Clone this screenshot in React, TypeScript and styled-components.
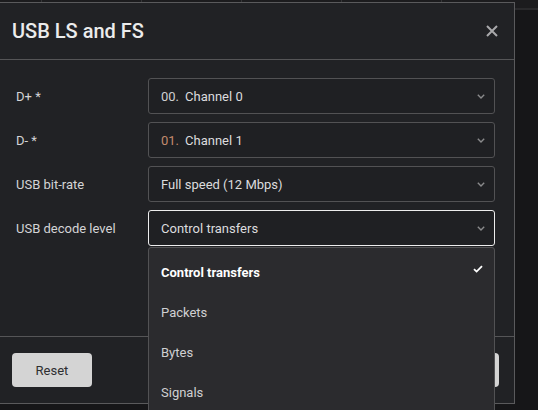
import React from 'react';
import styled, { createGlobalStyle } from 'styled-components';

const GlobalStyle = createGlobalStyle`
  html, body {
    margin: 0;
    padding: 0;
    background: #161618;
  }
  * {
    box-sizing: border-box;
  }
`;

type Field = {
  label: string;
  prefix?: string;
  value: string;
  accent?: boolean;
};

const fields: Field[] = [
  { label: 'D+ *', prefix: '00.', value: 'Channel 0' },
  { label: 'D- *', prefix: '01.', value: 'Channel 1', accent: true },
  { label: 'USB bit-rate', value: 'Full speed (12 Mbps)' },
];

const levels = ['Control transfers', 'Packets', 'Bytes', 'Signals'];

const Chevron = () => (
  <svg width="8" height="5" viewBox="0 0 8 5" fill="none">
    <path d="M0.8 0.8 L4 4 L7.2 0.8" stroke="#8a8a8c" strokeWidth="1.4" />
  </svg>
);

const App = () => {
  return (
    <Page>
      <GlobalStyle />
      <TableHead>
        {[0, 1, 2, 3, 4, 5].map((i) => (
          <HeadCell key={i} />
        ))}
      </TableHead>

      <Modal>
        <Header>
          <Title>USB LS and FS</Title>
          <CloseButton aria-label="Close">
            <svg width="12" height="12" viewBox="0 0 12 12">
              <path d="M1 1 L11 11 M11 1 L1 11" stroke="#a9a9ab" strokeWidth="2" />
            </svg>
          </CloseButton>
        </Header>

        <Body>
          {fields.map((f) => (
            <Row key={f.label}>
              <Label>{f.label}</Label>
              <Select>
                <SelectText>
                  {f.prefix && <Prefix $accent={f.accent}>{f.prefix}</Prefix>}
                  {f.value}
                </SelectText>
                <Chevron />
              </Select>
            </Row>
          ))}
          <Row>
            <Label>USB decode level</Label>
            <SelectWrap>
              <Select $focused>
                <SelectText>Control transfers</SelectText>
                <Chevron />
              </Select>
              <Menu>
                {levels.map((l, i) => (
                  <MenuItem key={l} $selected={i === 0}>
                    {l}
                    {i === 0 && (
                      <svg width="10" height="8" viewBox="0 0 10 8" fill="none">
                        <path d="M1 4.2 L3.6 6.6 L9 1.2" stroke="#ffffff" strokeWidth="1.8" />
                      </svg>
                    )}
                  </MenuItem>
                ))}
              </Menu>
            </SelectWrap>
          </Row>
        </Body>

        <Footer>
          <Button>Reset</Button>
          <Button>Apply</Button>
        </Footer>
      </Modal>
    </Page>
  );
};

const Page = styled.div`
  position: relative;
  width: 538px;
  height: 410px;
  overflow: hidden;
  background: #161618;
  font-family: Roboto, 'Noto Sans', sans-serif;
`;

const TableHead = styled.div`
  display: grid;
  grid-template-columns: 42px repeat(5, 100px);
  height: 10px;
  background: #1c1c1e;
  border-bottom: 2px solid #2a2a2c;
`;

const HeadCell = styled.div`
  border-right: 1px solid #353537;
`;

const Modal = styled.div`
  position: absolute;
  top: 2px;
  left: -2px;
  width: 517px;
  height: 402px;
  display: flex;
  flex-direction: column;
  background: #212225;
  border: 1px solid #5a5a5c;
`;

const Header = styled.div`
  display: flex;
  align-items: center;
  justify-content: space-between;
  height: 57px;
  padding: 0 14px 0 13px;
  border-bottom: 1px solid #555557;
`;

const Title = styled.h2`
  margin: 0;
  font-size: 20px;
  font-weight: 500;
  color: #ececec;
`;

const CloseButton = styled.button`
  display: flex;
  align-items: center;
  justify-content: center;
  width: 16px;
  height: 16px;
  padding: 0;
  border: none;
  background: transparent;
`;

const Body = styled.div`
  flex: 1;
  display: flex;
  flex-direction: column;
  gap: 8px;
  padding: 18px 19px 0 17px;
`;

const Row = styled.div`
  display: grid;
  grid-template-columns: 132px 1fr;
  align-items: center;
`;

const Label = styled.span`
  font-size: 13px;
  color: #d4d4d6;
`;

const SelectWrap = styled.div`
  position: relative;
`;

const Select = styled.div<{ $focused?: boolean }>`
  display: flex;
  align-items: center;
  justify-content: space-between;
  height: 36px;
  padding: 0 9px 0 12px;
  border: 1px solid ${(p) => (p.$focused ? '#ededed' : '#525254')};
  border-radius: 3px;
  background: #1f2023;
`;

const SelectText = styled.span`
  font-size: 13px;
  color: #dcdcde;
`;

const Prefix = styled.span<{ $accent?: boolean }>`
  margin-right: 6px;
  color: ${(p) => (p.$accent ? '#c38a6d' : '#cfcfd1')};
`;

const Menu = styled.div`
  position: absolute;
  top: calc(100% + 1px);
  left: 0;
  right: 0;
  padding: 4px 0;
  background: #2b2b2e;
  border: 1px solid #525254;
  border-radius: 3px;
`;

const MenuItem = styled.div<{ $selected?: boolean }>`
  display: flex;
  align-items: center;
  justify-content: space-between;
  height: 40px;
  padding: 0 11px 0 12px;
  font-size: 13px;
  font-weight: ${(p) => (p.$selected ? 700 : 400)};
  color: ${(p) => (p.$selected ? '#ffffff' : '#d0d0d2')};

  svg {
    margin-bottom: 6px;
  }
`;

const Footer = styled.div`
  display: flex;
  align-items: center;
  justify-content: space-between;
  height: 67px;
  padding: 0 15px 0 13px;
  border-top: 1px solid #555557;
`;

const Button = styled.button`
  width: 80px;
  height: 34px;
  border: none;
  border-radius: 4px;
  background: #d4d4d4;
  font-family: Roboto, 'Noto Sans', sans-serif;
  font-size: 13px;
  color: #2e2e30;
`;

export default App;
